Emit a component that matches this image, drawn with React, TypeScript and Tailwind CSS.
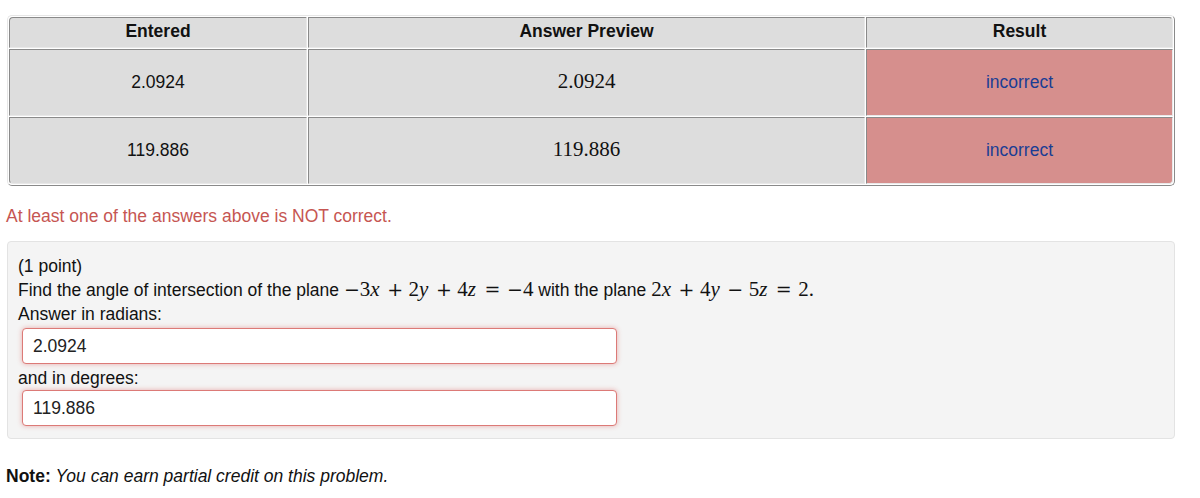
import type { ReactNode } from "react";

type Row = { entered: string; preview: string; result: string };

const rows: Row[] = [
	{ entered: "2.0924", preview: "2.0924", result: "incorrect" },
	{ entered: "119.886", preview: "119.886", result: "incorrect" },
];

// inset-looking cell border, like the old table styling
const cell =
	"border border-t-[#8a8a8a] border-l-[#8a8a8a] border-b-[#e8e8e8] border-r-[#e8e8e8] text-center align-middle";

const input =
	"ml-[4px] w-[595px] h-[36px] px-[10px] bg-white border border-[#dc7a77] rounded-[4px] shadow-[0_0_5px_rgba(217,83,79,0.45)] outline-none text-[17.5px] text-[#222] align-top";

function V({ children }: { children: ReactNode }) {
	return <span className="italic pr-[2px]">{children}</span>;
}

// operators drawn with a wider serif so they get the width of the math font
function Sym({ children }: { children: ReactNode }) {
	return <span className="font-['DejaVu_Serif',serif] font-light text-[19px]">{children}</span>;
}

function Op({ children }: { children: ReactNode }) {
	return (
		<span className="mx-[5.5px]">
			<Sym>{children}</Sym>
		</span>
	);
}

function Rel({ children }: { children: ReactNode }) {
	return (
		<span className="mx-[6.5px]">
			<Sym>{children}</Sym>
		</span>
	);
}

function MathText({ children }: { children: ReactNode }) {
	return (
		<span className="font-['Liberation_Serif','Times_New_Roman',serif] text-[21px] leading-none whitespace-nowrap">
			{children}
		</span>
	);
}

export default function App() {
	return (
		<main className="w-[1200px] h-[498px] bg-white font-['Liberation_Sans',Arial,sans-serif] text-[17.5px] text-[#111]">
			<div className="ml-[7px] w-[1168px] pt-[15px]">
				{/* ATTEMPT RESULTS */}
				<table className="w-full border-separate border-spacing-[1px] border border-t-[#e6e6e6] border-l-[#e6e6e6] border-b-[#8a8a8a] border-r-[#8a8a8a] rounded-[5px]">
					<thead>
						<tr className="h-[31px]">
							<th className={`${cell} w-[298px] bg-[#dddddd] font-bold leading-[20px] pb-[3px] rounded-tl-[4px]`}>
								Entered
							</th>
							<th className={`${cell} w-[557px] bg-[#dddddd] font-bold leading-[20px] pb-[3px]`}>
								Answer Preview
							</th>
							<th className={`${cell} bg-[#dddddd] font-bold leading-[20px] pb-[3px] rounded-tr-[4px]`}>
								Result
							</th>
						</tr>
					</thead>
					<tbody>
						{rows.map((r, i) => (
							<tr key={i} className="h-[67px]">
								<td className={`${cell} bg-[#dddddd] ${i === rows.length - 1 ? "rounded-bl-[4px]" : ""}`}>
									{r.entered}
								</td>
								<td className={`${cell} bg-[#dddddd]`}>
									<MathText>{r.preview}</MathText>
								</td>
								<td
									className={`${cell} bg-[#d68f8d] text-[#1a3d94] ${
										i === rows.length - 1 ? "rounded-br-[4px]" : ""
									}`}
								>
									{r.result}
								</td>
							</tr>
						))}
					</tbody>
				</table>

				<p className="mt-[20px] -ml-[1px] leading-[20px] text-[#c65652]">
					At least one of the answers above is NOT correct.
				</p>

				{/* PROBLEM */}
				<section className="mt-[15px] h-[198px] bg-[#f4f4f4] border border-[#e3e3e3] rounded-[4px] pl-[10px] pt-[12px] leading-[24px]">
					<div>(1 point)</div>
					<div>
						Find the angle of intersection of the plane{" "}
						<MathText>
							<Sym>−</Sym>3<V>x</V>
							<Op>+</Op>2<V>y</V>
							<Op>+</Op>4<V>z</V>
							<Rel>=</Rel>
							<Sym>−</Sym>4
						</MathText>{" "}
						with the plane{" "}
						<MathText>
							2<V>x</V>
							<Op>+</Op>4<V>y</V>
							<Op>−</Op>5<V>z</V>
							<Rel>=</Rel>2.
						</MathText>
					</div>
					<div>Answer in radians:</div>
					<input readOnly value="2.0924" className={`mt-[2px] ${input}`} />
					<div className="mt-[2px]">and in degrees:</div>
					<input readOnly value="119.886" className={input} />
				</section>

				<p className="mt-[27px] -ml-[1px] leading-[20px]">
					<b>Note:</b> <i>You can earn partial credit on this problem.</i>
				</p>
			</div>
		</main>
	);
}
